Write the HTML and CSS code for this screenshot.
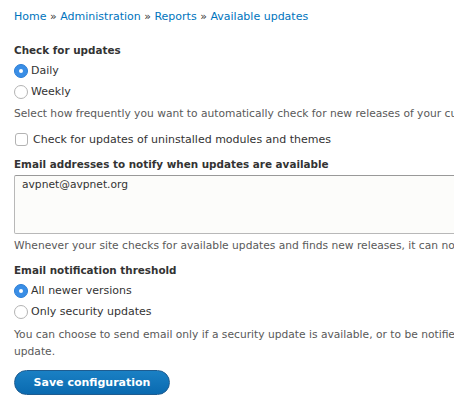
FILE: index.html
```html
<!DOCTYPE html>
<html>
<head>
<meta charset="utf-8">
<link rel="stylesheet" href="styles.css">
</head>
<body>
<div class="page">
  <nav class="breadcrumb"><a href="#">Home</a> » <a href="#">Administration</a> » <a href="#">Reports</a> » <a href="#">Available updates</a></nav>

  <div class="group first">
    <div class="label">Check for updates</div>
    <div class="option"><span class="radio checked"></span><span>Daily</span></div>
    <div class="option"><span class="radio"></span><span>Weekly</span></div>
    <div class="desc">Select how frequently you want to automatically check for new releases of your currently installed modules and themes.</div>
  </div>

  <div class="option check-row"><span class="checkbox"></span><span>Check for updates of uninstalled modules and themes</span></div>

  <div class="group">
    <div class="label email-label">Email addresses to notify when updates are available</div>
    <div class="textarea">avpnet@avpnet.org</div>
    <div class="desc after-area">Whenever your site checks for available updates and finds new releases, it can notify a list of users via email.</div>
  </div>

  <div class="group">
    <div class="label threshold">Email notification threshold</div>
    <div class="option"><span class="radio checked"></span><span>All newer versions</span></div>
    <div class="option"><span class="radio"></span><span>Only security updates</span></div>
    <div class="desc wrap"><div>You can choose to send email only if a security update is available, or to be notified about all newer versions.</div><div>update.</div></div>
  </div>

  <div class="actions"><div class="button">Save configuration</div></div>
</div>
</body>
</html>
```

FILE: styles.css
```css
html, body {
  margin: 0;
  padding: 0;
  background: #ffffff;
}
body {
  font-family: "DejaVu Sans", "Liberation Sans", sans-serif;
  font-size: 11px;
  color: #333333;
  overflow: hidden;
}
.page {
  padding: 0 0 0 14px;
  width: 440px;
  overflow: hidden;
}
.breadcrumb {
  margin-top: 7px;
  line-height: 20px;
  color: #333;
  white-space: nowrap;
}
.breadcrumb a {
  color: #0074bd;
  text-decoration: none;
}
.label {
  font-weight: bold;
  font-size: 10.4px;
  line-height: 20px;
  white-space: nowrap;
}
.first .label {
  margin-top: 14px;
  line-height: 19px;
}
.option {
  display: flex;
  align-items: center;
  gap: 3px;
  height: 21px;
  white-space: nowrap;
}
.radio {
  box-sizing: border-box;
  width: 14px;
  height: 14px;
  border-radius: 50%;
  border: 1px solid #b3b3b3;
  background: #fff;
  flex: none;
  position: relative;
}
.radio.checked {
  background: #3a8ee6;
  border-color: #2a7ed6;
}
.radio.checked::after {
  content: "";
  position: absolute;
  left: 4px;
  top: 4px;
  width: 4px;
  height: 4px;
  border-radius: 50%;
  background: #fff;
}
.checkbox {
  box-sizing: border-box;
  width: 13px;
  height: 13px;
  margin-left: 1px;
  margin-right: 2px;
  border-radius: 3px;
  border: 1px solid #b3b3b3;
  background: #fff;
  flex: none;
}
.desc {
  font-size: 10.7px;
  line-height: 17px;
  color: #595959;
  margin-top: 3px;
  white-space: nowrap;
}
.desc.wrap {
  margin-top: 4px;
}
.check-row {
  margin-top: 7px;
  height: 20px;
}
.email-label {
  margin-top: 5px;
}
.textarea {
  box-sizing: border-box;
  margin-top: 1px;
  height: 59px;
  width: 460px;
  border: 1px solid #b8b8b8;
  border-top-color: #999;
  border-radius: 2px;
  background: #fcfcfa;
  padding: 1px 7px;
  font-size: 10.7px;
  line-height: 16px;
  color: #333;
}
.after-area {
  margin-top: 3px;
}
.threshold {
  margin-top: 7px;
  line-height: 19px;
}
.actions {
  margin-top: 10px;
  display: flex;
}
.button {
  box-sizing: border-box;
  width: 156px;
  height: 25px;
  display: flex;
  align-items: center;
  justify-content: center;
  border-radius: 13px;
  background: linear-gradient(#1a80c4, #0a6ab0);
  border: 1px solid #1e5c90;
  color: #fff;
  font-weight: bold;
  font-size: 11px;
}
```
